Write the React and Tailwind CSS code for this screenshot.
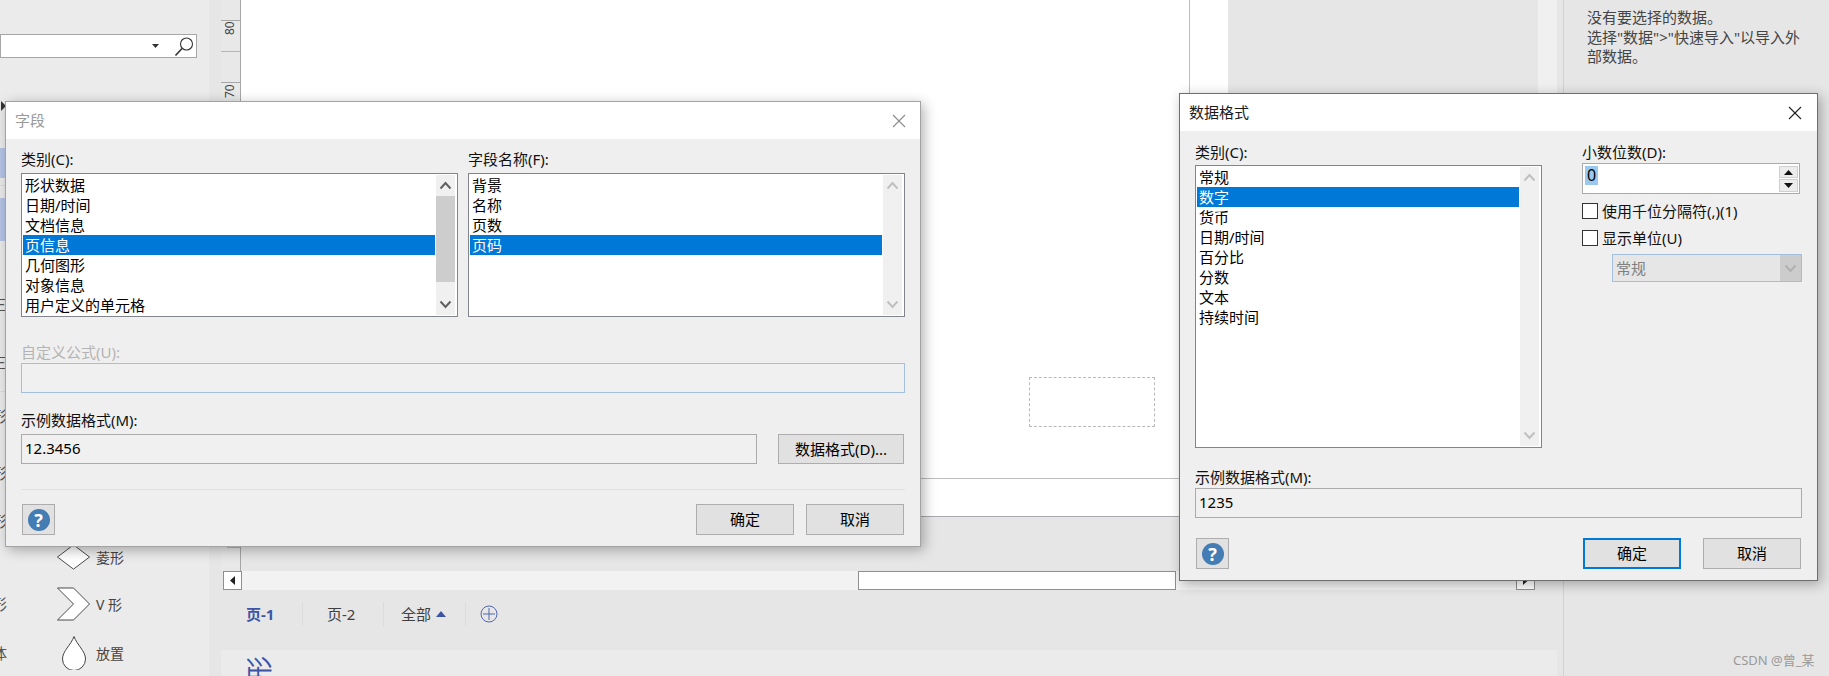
import React from "react";

const Chevron = ({ dir, color }) => (
  <svg width="13" height="9" viewBox="0 0 13 9" fill="none" stroke={color} strokeWidth="2">
    <polyline points={dir === "up" ? "1.5,7.5 6.5,2 11.5,7.5" : "1.5,1.5 6.5,7 11.5,1.5"} />
  </svg>
);

const Scrollbar = ({ active }) => {
  const c = active ? "#606060" : "#c0c0c0";
  return (
    <div className="ml-[1px] w-[19px] shrink-0 bg-[#f0f0f0] flex flex-col">
      <div className="h-[21px] shrink-0 flex items-center justify-center"><Chevron dir="up" color={c} /></div>
      {active ? <div className="h-[86px] shrink-0 bg-[#cdcdcd]" /> : null}
      <div className="flex-1" />
      <div className="h-[21px] shrink-0 flex items-center justify-center"><Chevron dir="down" color={c} /></div>
    </div>
  );
};

const ListBox = ({ items, selected, active, className }) => (
  <div className={"border border-[#83858c] bg-white pt-[1px] pb-[1px] pl-[1px] pr-[2px] flex " + className}>
    <div className="flex-1 min-w-0">
      {items.map((t) => (
        <div key={t} className={"h-5 leading-5 pl-[2px] text-[15px] " + (t === selected ? "bg-[#0078d7] text-white" : "text-black")}>{t}</div>
      ))}
    </div>
    <Scrollbar active={active} />
  </div>
);

const Label = ({ children, className = "" }) => (
  <div className={"h-5 leading-5 text-[15px] text-[#111] whitespace-nowrap " + className}>{children}</div>
);

const Btn = ({ children, className = "" }) => (
  <div className={"h-[31px] flex items-center justify-center bg-[#e1e1e1] border border-[#adadad] text-[15px] text-black " + className}>{children}</div>
);

const Help = () => (
  <div className="w-[33px] h-[31px] flex items-center justify-center bg-[#e1e1e1] border border-[#adadad]">
    <div className="w-[22px] h-[22px] rounded-full bg-[#447cb4] flex items-center justify-center text-white font-bold text-[18px] leading-none">?</div>
  </div>
);

const Close = ({ color }) => (
  <svg width="14" height="14" viewBox="0 0 14 14" stroke={color} strokeWidth="1.1"><line x1="1" y1="1" x2="13" y2="13" /><line x1="13" y1="1" x2="1" y2="13" /></svg>
);

const Tri = ({ up }) => (
  <svg width="9" height="5" viewBox="0 0 9 5" fill="#111"><polygon points={up ? "4.5,0 9,5 0,5" : "0,0 9,0 4.5,5"} /></svg>
);

const FieldDialog = () => (
  <div className="absolute left-[5px] top-[101px] w-[916px] h-[446px] border border-[#a3a3a3] bg-[#efefef] shadow-[3px_3px_12px_rgba(0,0,0,0.3)] flex flex-col">
    <div className="h-[37px] shrink-0 bg-white flex items-center justify-between pl-[9px] pr-[14px]">
      <span className="text-[15px] text-[#999]">字段</span>
      <Close color="#8c8c8c" />
    </div>
    <div className="pl-[15px] pt-[10px]">
      <div className="flex gap-[10px]">
        <div className="w-[437px]">
          <Label>类别(C):</Label>
          <ListBox className="mt-[4px] h-[144px]" active selected="页信息" items={["形状数据", "日期/时间", "文档信息", "页信息", "几何图形", "对象信息", "用户定义的单元格"]} />
        </div>
        <div className="w-[437px]">
          <Label>字段名称(F):</Label>
          <ListBox className="mt-[4px] h-[144px]" selected="页码" items={["背景", "名称", "页数", "页码"]} />
        </div>
      </div>
      <Label className="mt-[25px] !text-[#b4b4b4]">自定义公式(U):</Label>
      <div className="mt-[1px] w-[884px] h-[30px] border border-[#a3bfdc] bg-[#f0f0f0]" />
      <Label className="mt-[17px]">示例数据格式(M):</Label>
      <div className="mt-[4px] flex">
        <div className="w-[736px] h-[30px] border border-[#ababab] bg-[#f0f0f0] pl-[3px] text-[15px] leading-[27px] text-black">12.3456</div>
        <Btn className="ml-[21px] w-[126px] !h-[30px]">数据格式(D)...</Btn>
      </div>
      <div className="mt-[25px] w-[884px] h-[1px] bg-[#d9e2ea]" />
      <div className="mt-[14px] w-[883px] flex items-center pl-[1px]">
        <Help />
        <div className="flex-1" />
        <Btn className="w-[98px]">确定</Btn>
        <Btn className="ml-[12px] w-[98px]">取消</Btn>
      </div>
    </div>
  </div>
);

const Check = ({ children, className = "" }) => (
  <div className={"flex items-center h-4 " + className}>
    <div className="w-4 h-4 border border-[#333] bg-white shrink-0" />
    <span className="ml-[4px] text-[15px] text-[#111] whitespace-nowrap">{children}</span>
  </div>
);

const FormatDialog = () => (
  <div className="absolute left-[1179px] top-[93px] w-[639px] h-[488px] border border-[#6e6e6e] bg-[#efefef] shadow-[3px_3px_12px_rgba(0,0,0,0.3)] flex flex-col">
    <div className="h-[37px] shrink-0 bg-white flex items-center justify-between pl-[9px] pr-[15px]">
      <span className="text-[15px] text-[#1a1a1a]">数据格式</span>
      <Close color="#222" />
    </div>
    <div className="pl-[15px] pt-[11px]">
      <div className="flex">
        <div className="w-[347px]">
          <Label>类别(C):</Label>
          <ListBox className="mt-[3px] h-[283px]" selected="数字" items={["常规", "数字", "货币", "日期/时间", "百分比", "分数", "文本", "持续时间"]} />
        </div>
        <div className="ml-[40px] w-[220px]">
          <Label>小数位数(D):</Label>
          <div className="mt-[1px] w-[218px] h-[31px] border border-[#ababab] bg-white flex pl-[2px] pt-[2px]">
            <div className="w-[13px] h-[19px] bg-[#99c9ef] text-[16px] leading-[19px] text-black text-center">0</div>
            <div className="flex-1" />
            <div className="w-[19px] mr-[1px] flex flex-col gap-[1px]">
              <div className="h-[12px] bg-[#ececec] border border-[#cfcfcf] flex items-center justify-center"><Tri up /></div>
              <div className="h-[13px] bg-[#ececec] border border-[#cfcfcf] flex items-center justify-center"><Tri /></div>
            </div>
          </div>
          <Check className="mt-[9px]">使用千位分隔符(,)(1)</Check>
          <Check className="mt-[11px]">显示单位(U)</Check>
          <div className="mt-[8px] ml-[30px] w-[190px] h-[28px] border border-[#a3bfdc] bg-[#e6e6e6] flex items-center pl-[3px]">
            <span className="flex-1 text-[15px] text-[#808080]">常规</span>
            <div className="w-[21px] h-full bg-[#cccccc] flex items-center justify-center"><Chevron dir="down" color="#b0b0b0" /></div>
          </div>
        </div>
      </div>
      <Label className="mt-[19px]">示例数据格式(M):</Label>
      <div className="mt-[1px] w-[607px] h-[30px] border border-[#ababab] bg-[#f0f0f0] pl-[3px] text-[15px] leading-[27px] text-black">1235</div>
      <div className="mt-[20px] w-[606px] flex items-center pl-[1px]">
        <Help />
        <div className="flex-1" />
        <Btn className="w-[98px] !border-2 !border-[#0078d7]">确定</Btn>
        <Btn className="ml-[22px] w-[98px]">取消</Btn>
      </div>
    </div>
  </div>
);

const Frag = ({ t, className = "" }) => (
  <div className={"-ml-[8px] h-[15px] leading-[15px] text-[15px] text-[#555] " + className}>{t}</div>
);

const ShapeRow = ({ frag, shape, label, className = "" }) => (
  <div className={"flex items-center h-[34px] " + className}>
    <div className="-ml-[8px] w-[65px] text-[15px] text-[#555]">{frag}</div>
    <div className="w-[33px] h-[34px] flex items-center justify-center overflow-visible">{shape}</div>
    <span className="ml-[6px] text-[14px] text-[#444] whitespace-nowrap">{label}</span>
  </div>
);

const LeftPanel = () => (
  <div className="w-[209px] shrink-0 bg-[#ebebeb] overflow-hidden">
    <div className="mt-[34px] w-[197px] h-[24px] border border-[#a6a6a6] bg-white flex items-center justify-end pr-[1px]">
      <svg width="7" height="4" viewBox="0 0 7 4" fill="#333" className="mr-[15px]"><polygon points="0,0 7,0 3.5,4" /></svg>
      <svg width="21" height="21" viewBox="0 0 21 21" fill="none" stroke="#333" strokeWidth="1.1">
        <circle cx="12.5" cy="8" r="6" />
        <line x1="8" y1="12.5" x2="1.5" y2="19.5" strokeWidth="1.6" />
      </svg>
    </div>
    <svg width="5" height="10" viewBox="0 0 5 10" fill="#333" className="block mt-[43px] ml-[1px]"><polygon points="0,0 5,5 0,10" /></svg>
    <div className="mt-[37px] h-[30px] bg-[#b4c4e4]" />
    <div className="mt-[7px] h-[1px] bg-[#dcdcdc]" />
    <div className="mt-[12px] h-[43px] bg-[#b4c4e4]" />
    <Frag t="三" className="mt-[56px]" />
    <Frag t="三" className="mt-[43px]" />
    <div className="mt-[21px] h-[1px] bg-[#dcdcdc]" />
    <Frag t="形" className="mt-[17px]" />
    <Frag t="形" className="mt-[42px]" />
    <Frag t="形" className="mt-[33px]" />
    <ShapeRow
      className="mt-[11px]"
      frag=""
      label="菱形"
      shape={<svg width="34" height="26" viewBox="0 0 34 26" fill="#fff" stroke="#444"><polygon points="17,0.5 33.5,13 17,25.5 0.5,13" /></svg>}
    />
    <ShapeRow
      className="mt-[13px]"
      frag="形"
      label="V 形"
      shape={<svg width="34" height="34" viewBox="0 0 34 34" fill="#fff" stroke="#444"><polygon points="0.5,0.5 17,0.5 33.5,17 17,33.5 0.5,33.5 17,17" /></svg>}
    />
    <ShapeRow
      className="mt-[15px]"
      frag="体"
      label="放置"
      shape={<svg width="24" height="34" viewBox="0 0 24 34" fill="#fff" stroke="#444"><path d="M12 0.5 C15 9 23.5 15 23.5 23 A11.5 11.5 0 0 1 0.5 23 C0.5 15 9 9 12 0.5 Z" /></svg>}
    />
  </div>
);

const Ruler = () => (
  <div className="ml-[12px] w-[20px] h-[571px] shrink-0 bg-[#e8e8e8] border-r border-[#a6a6a6] relative-none flex flex-col">
    <div className="h-[21px] shrink-0 border-b border-[#a6a6a6]" />
    <div className="h-[31px] shrink-0 border-b border-[#b5b5b5] flex">
      <span className="[writing-mode:vertical-rl] rotate-180 text-[12px] leading-[12px] text-[#444] h-[14px] ml-[3px]">80</span>
    </div>
    <div className="h-[31px] shrink-0 border-b border-[#a6a6a6]" />
    <div className="shrink-0 flex">
      <span className="[writing-mode:vertical-rl] rotate-180 text-[12px] leading-[12px] text-[#444] h-[14px] ml-[3px] mt-[1px]">70</span>
    </div>
    <div className="mt-[449px] ml-[6px] h-[1px] bg-[#b5b5b5]" />
  </div>
);

const Center = () => (
  <div className="w-[1355px] shrink-0 bg-[#e6e6e6] border-r border-[#d2d2d2] flex flex-col">
    <div className="h-[571px] shrink-0 flex">
      <Ruler />
      <div className="w-[987px] h-[517px] shrink-0 bg-white border-b border-[#a9a9ad]">
        <div className="w-[949px] h-[479px] border-r border-b border-[#bdbdbd] pt-[377px] pl-[788px]">
          <div className="w-[126px] h-[50px] border border-dashed border-[#b8b8b8]" />
        </div>
      </div>
      <div className="ml-[310px] w-[19px] bg-[#f0f0f0]" />
    </div>
    <div className="h-[19px] shrink-0 flex ml-[14px] w-[1312px]">
      <div className="w-[19px] bg-white border border-[#8f8f8f] flex items-center justify-center">
        <svg width="5" height="9" viewBox="0 0 5 9" fill="#222"><polygon points="5,0 0,4.5 5,9" /></svg>
      </div>
      <div className="w-[1274px] bg-[#f2f2f2] pl-[616px]">
        <div className="w-[318px] h-[19px] bg-white border border-[#8f8f8f]" />
      </div>
      <div className="w-[19px] bg-white border border-[#8f8f8f] flex items-center justify-center">
        <svg width="5" height="9" viewBox="0 0 5 9" fill="#222"><polygon points="0,0 5,4.5 0,9" /></svg>
      </div>
    </div>
    <div className="h-[60px] shrink-0 pl-[12px] pt-[12px] flex items-start text-[15px] text-[#404040]">
      <div className="w-[82px] h-[24px] pl-[25px] leading-[24px] border-r border-[#dcdcdc] font-bold text-[#3b54a5]">页-1</div>
      <div className="w-[81px] h-[24px] pl-[24px] leading-[24px] border-r border-[#dcdcdc]">页-2</div>
      <div className="w-[82px] h-[24px] pl-[17px] border-r border-[#dcdcdc] flex items-center">
        <span>全部</span>
        <svg width="10" height="6" viewBox="0 0 10 6" fill="#3b54a5" className="ml-[5px]"><polygon points="5,0 10,6 0,6" /></svg>
      </div>
      <svg width="18" height="18" viewBox="0 0 18 18" fill="none" stroke="#5468ad" strokeWidth="1" className="ml-[14px] mt-[3px]">
        <circle cx="9" cy="9" r="8" />
        <line x1="9" y1="3" x2="9" y2="15" />
        <line x1="3" y1="9" x2="15" y2="9" />
      </svg>
    </div>
    <div className="flex-1 ml-[12px] w-[1336px] bg-[#ebebeb] overflow-hidden pl-[24px] pt-[4px]">
      <div className="w-[28px] h-[28px] -rotate-90 text-[26px] leading-[28px] text-[#3b54a5]">形</div>
    </div>
  </div>
);

const RightPanel = () => (
  <div className="flex-1 bg-[#e6e6e6] pl-[23px] pt-[8px] text-[15px] leading-[19.5px] text-[#444] whitespace-nowrap">
    没有要选择的数据。<br />
    选择"数据"&gt;"快速导入"以导入外<br />
    部数据。
  </div>
);

export default function App() {
  return (
    <div className="relative w-[1829px] h-[676px] overflow-hidden flex [font-family:'Noto_Sans','Noto_Sans_CJK_SC',sans-serif]">
      <LeftPanel />
      <Center />
      <RightPanel />
      <FieldDialog />
      <FormatDialog />
      <div className="absolute left-[1733px] top-[651px] text-[13px] leading-[18px] text-[#9a9a9a]">CSDN @曾_某</div>
    </div>
  );
}
